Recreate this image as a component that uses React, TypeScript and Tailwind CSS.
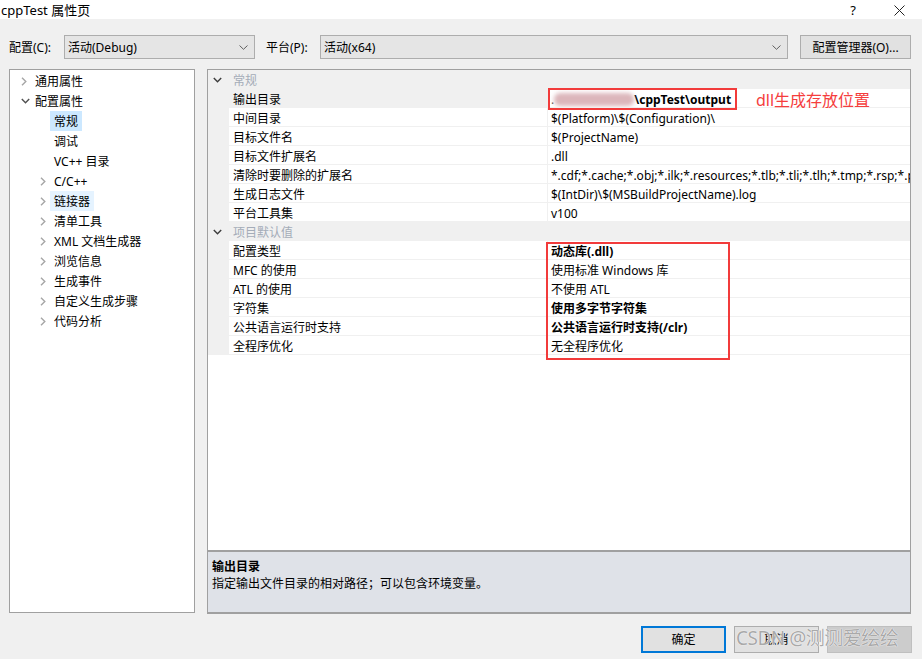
import React from "react";

const FONT = '"Noto Sans", "Noto Sans CJK SC", sans-serif';

function ChevronRight({ className = "" }: { className?: string }) {
  return (
    <svg width="6" height="9" viewBox="0 0 6 9" className={className}>
      <path d="M1 0.8 L4.8 4.5 L1 8.2" fill="none" stroke="#a6a6a6" strokeWidth="1.4" />
    </svg>
  );
}

function ChevronDown({ color = "#404040" }: { color?: string }) {
  return (
    <svg width="9" height="6" viewBox="0 0 9 6">
      <path d="M0.8 1 L4.5 4.8 L8.2 1" fill="none" stroke={color} strokeWidth="1.4" />
    </svg>
  );
}

function Combo({ width, text }: { width: string; text: string }) {
  return (
    <div
      className={`${width} h-[24px] flex items-center bg-[#e5e5e5] border border-[#adadad] pl-[3px] pr-[6px] pt-[1px]`}
    >
      <span className="flex-1">{text}</span>
      <svg width="9" height="5" viewBox="0 0 9 5">
        <path d="M0.5 0.5 L4.5 4.3 L8.5 0.5" fill="none" stroke="#606060" strokeWidth="1" />
      </svg>
    </div>
  );
}

type TreeItem = { label: string; level: 0 | 1; arrow?: "right" | "down"; state?: "selected" | "hover" };

const tree: TreeItem[] = [
  { label: "通用属性", level: 0, arrow: "right" },
  { label: "配置属性", level: 0, arrow: "down" },
  { label: "常规", level: 1, state: "selected" },
  { label: "调试", level: 1 },
  { label: "VC++ 目录", level: 1 },
  { label: "C/C++", level: 1, arrow: "right" },
  { label: "链接器", level: 1, arrow: "right", state: "hover" },
  { label: "清单工具", level: 1, arrow: "right" },
  { label: "XML 文档生成器", level: 1, arrow: "right" },
  { label: "浏览信息", level: 1, arrow: "right" },
  { label: "生成事件", level: 1, arrow: "right" },
  { label: "自定义生成步骤", level: 1, arrow: "right" },
  { label: "代码分析", level: 1, arrow: "right" },
];

function TreeRow({ item }: { item: TreeItem }) {
  const bg =
    item.state === "selected" ? "bg-[#cce8ff]" : item.state === "hover" ? "bg-[#e5f3ff]" : "";
  return (
    <div className={`flex items-center h-[20px] ${item.level === 0 ? "pl-[11px]" : "pl-[30px]"}`}>
      <div className="w-[10px] flex items-center justify-start">
        {item.arrow === "right" && <ChevronRight />}
        {item.arrow === "down" && <ChevronDown color="#505050" />}
      </div>
      <div className={`h-[20px] flex items-center px-[4px] pt-[1px] ${bg}`}>{item.label}</div>
    </div>
  );
}

type Prop = { name: string; value: React.ReactNode; bold?: boolean; selected?: boolean };

function HeaderRow({ title }: { title: string }) {
  return (
    <div className="flex items-center h-[19px] bg-[#f0f0f0]">
      <div className="w-[25px] pl-[5px] flex items-center">
        <ChevronDown color="#3c3c3c" />
      </div>
      <span className="text-[#a4acb8] pt-[2px]">{title}</span>
    </div>
  );
}

function PropRow({ p }: { p: Prop }) {
  return (
    <div className="flex h-[19px]">
      <div className="w-[21px] bg-[#f0f0f0]" />
      <div
        className={`w-[318px] flex items-center pl-[4px] pt-[3px] border-b border-[#f0f0f0] ${
          p.selected ? "bg-[#f0f0f0]" : "bg-white"
        }`}
      >
        {p.name}
      </div>
      <div
        className={`flex-1 min-w-0 flex items-center pl-[3px] pt-[3px] border-l border-b border-[#f0f0f0] whitespace-nowrap overflow-hidden ${
          p.bold ? "font-bold" : ""
        }`}
      >
        {p.value}
      </div>
    </div>
  );
}

const general: Prop[] = [
  {
    name: "输出目录",
    selected: true,
    bold: true,
    value: (
      <>
        <span className="font-normal text-[#555]">.</span>
        <span className="inline-block w-[80px] h-[13px] rounded-[6px] bg-[#dcb6bb] blur-[2px]" />
        <span>\cppTest\output</span>
      </>
    ),
  },
  { name: "中间目录", value: "$(Platform)\\$(Configuration)\\" },
  { name: "目标文件名", value: "$(ProjectName)" },
  { name: "目标文件扩展名", value: ".dll" },
  {
    name: "清除时要删除的扩展名",
    value: "*.cdf;*.cache;*.obj;*.ilk;*.resources;*.tlb;*.tli;*.tlh;*.tmp;*.rsp;*.pgc",
  },
  { name: "生成日志文件", value: "$(IntDir)\\$(MSBuildProjectName).log" },
  { name: "平台工具集", value: "v100" },
];

const defaults: Prop[] = [
  { name: "配置类型", value: "动态库(.dll)", bold: true },
  { name: "MFC 的使用", value: "使用标准 Windows 库" },
  { name: "ATL 的使用", value: "不使用 ATL" },
  { name: "字符集", value: "使用多字节字符集", bold: true },
  { name: "公共语言运行时支持", value: "公共语言运行时支持(/clr)", bold: true },
  { name: "全程序优化", value: "无全程序优化" },
];

export default function App() {
  return (
    <div
      className="relative w-[922px] h-[659px] overflow-hidden bg-[#f0f0f0] text-[12px] leading-none text-black flex flex-col"
      style={{ fontFamily: FONT }}
    >
      {/* title bar */}
      <div className="h-[19px] bg-white flex items-center pl-[1px] pr-[17px] pt-[1px]">
        <span className="text-[13px]">cppTest 属性页</span>
        <span className="ml-auto text-[13px] mr-[38px]">?</span>
        <svg width="11" height="11" viewBox="0 0 11 11">
          <path d="M0.5 0.5 L10.5 10.5 M10.5 0.5 L0.5 10.5" stroke="#222" strokeWidth="1" />
        </svg>
      </div>

      {/* configuration bar */}
      <div className="flex items-center h-[24px] mt-[16px] pl-[9px]">
        <span className="w-[55px] pt-[1px]">配置(C):</span>
        <Combo width="w-[191px]" text="活动(Debug)" />
        <span className="ml-[11px] w-[54px] pt-[1px]">平台(P):</span>
        <Combo width="w-[468px]" text="活动(x64)" />
        <button className="ml-[12px] w-[111px] h-[24px] pt-[1px] bg-[#e1e1e1] border border-[#adadad] flex items-center justify-center">
          配置管理器(O)...
        </button>
      </div>

      {/* main */}
      <div className="flex mt-[10px] pl-[9px] gap-[12px] h-[545px]">
        <div className="w-[186px] h-[544px] bg-white border border-[#a0a0a0] pt-[1px]">
          {tree.map((t) => (
            <TreeRow key={t.label} item={t} />
          ))}
        </div>

        <div className="w-[704px] flex flex-col border-x border-t border-[#a0a0a0]">
          <div className="relative h-[480px] bg-white">
            <HeaderRow title="常规" />
            {general.map((p) => (
              <PropRow key={p.name} p={p} />
            ))}
            <HeaderRow title="项目默认值" />
            {defaults.map((p) => (
              <PropRow key={p.name} p={p} />
            ))}

            {/* annotations */}
            <div className="absolute left-[340px] top-[18px] w-[189px] h-[22px] border-2 border-[#f23b3b]" />
            <div className="absolute left-[548px] top-[22px] text-[16px] text-[#f53d3d]">dll生成存放位置</div>
            <div className="absolute left-[338px] top-[172px] w-[184px] h-[118px] border-2 border-[#f23b3b]" />
          </div>
          <div className="h-[2px] bg-[#a0a0a0]" />
          <div className="h-[60px] bg-[#dfe2e8] pl-[4px] pt-[6px] leading-[17px]">
            <div className="font-bold">输出目录</div>
            <div>指定输出文件目录的相对路径；可以包含环境变量。</div>
          </div>
          <div className="h-[2px] bg-[#a0a0a0]" />
        </div>
      </div>

      {/* buttons */}
      <div className="flex justify-end gap-[8px] mt-[12px] pr-[10px]">
        <button className="w-[85px] h-[27px] pt-[1px] bg-[#e1e1e1] border-2 border-[#0078d7] flex items-center justify-center">
          确定
        </button>
        <button className="w-[85px] h-[27px] pt-[1px] bg-[#e1e1e1] border border-[#adadad] flex items-center justify-center">
          取消
        </button>
        <div className="w-[85px] h-[27px] bg-[#cccccc] border border-[#bfbfbf]" />
      </div>

      {/* watermark */}
      <div
        className="absolute left-[736px] top-[629px] text-[19px] tracking-[-0.5px] text-[#a9a9a9] whitespace-nowrap"
        style={{ textShadow: "0 0 1px #fff, 0 0 1px #fff" }}
      >
        CSDN @测测爱绘绘
      </div>
    </div>
  );
}
